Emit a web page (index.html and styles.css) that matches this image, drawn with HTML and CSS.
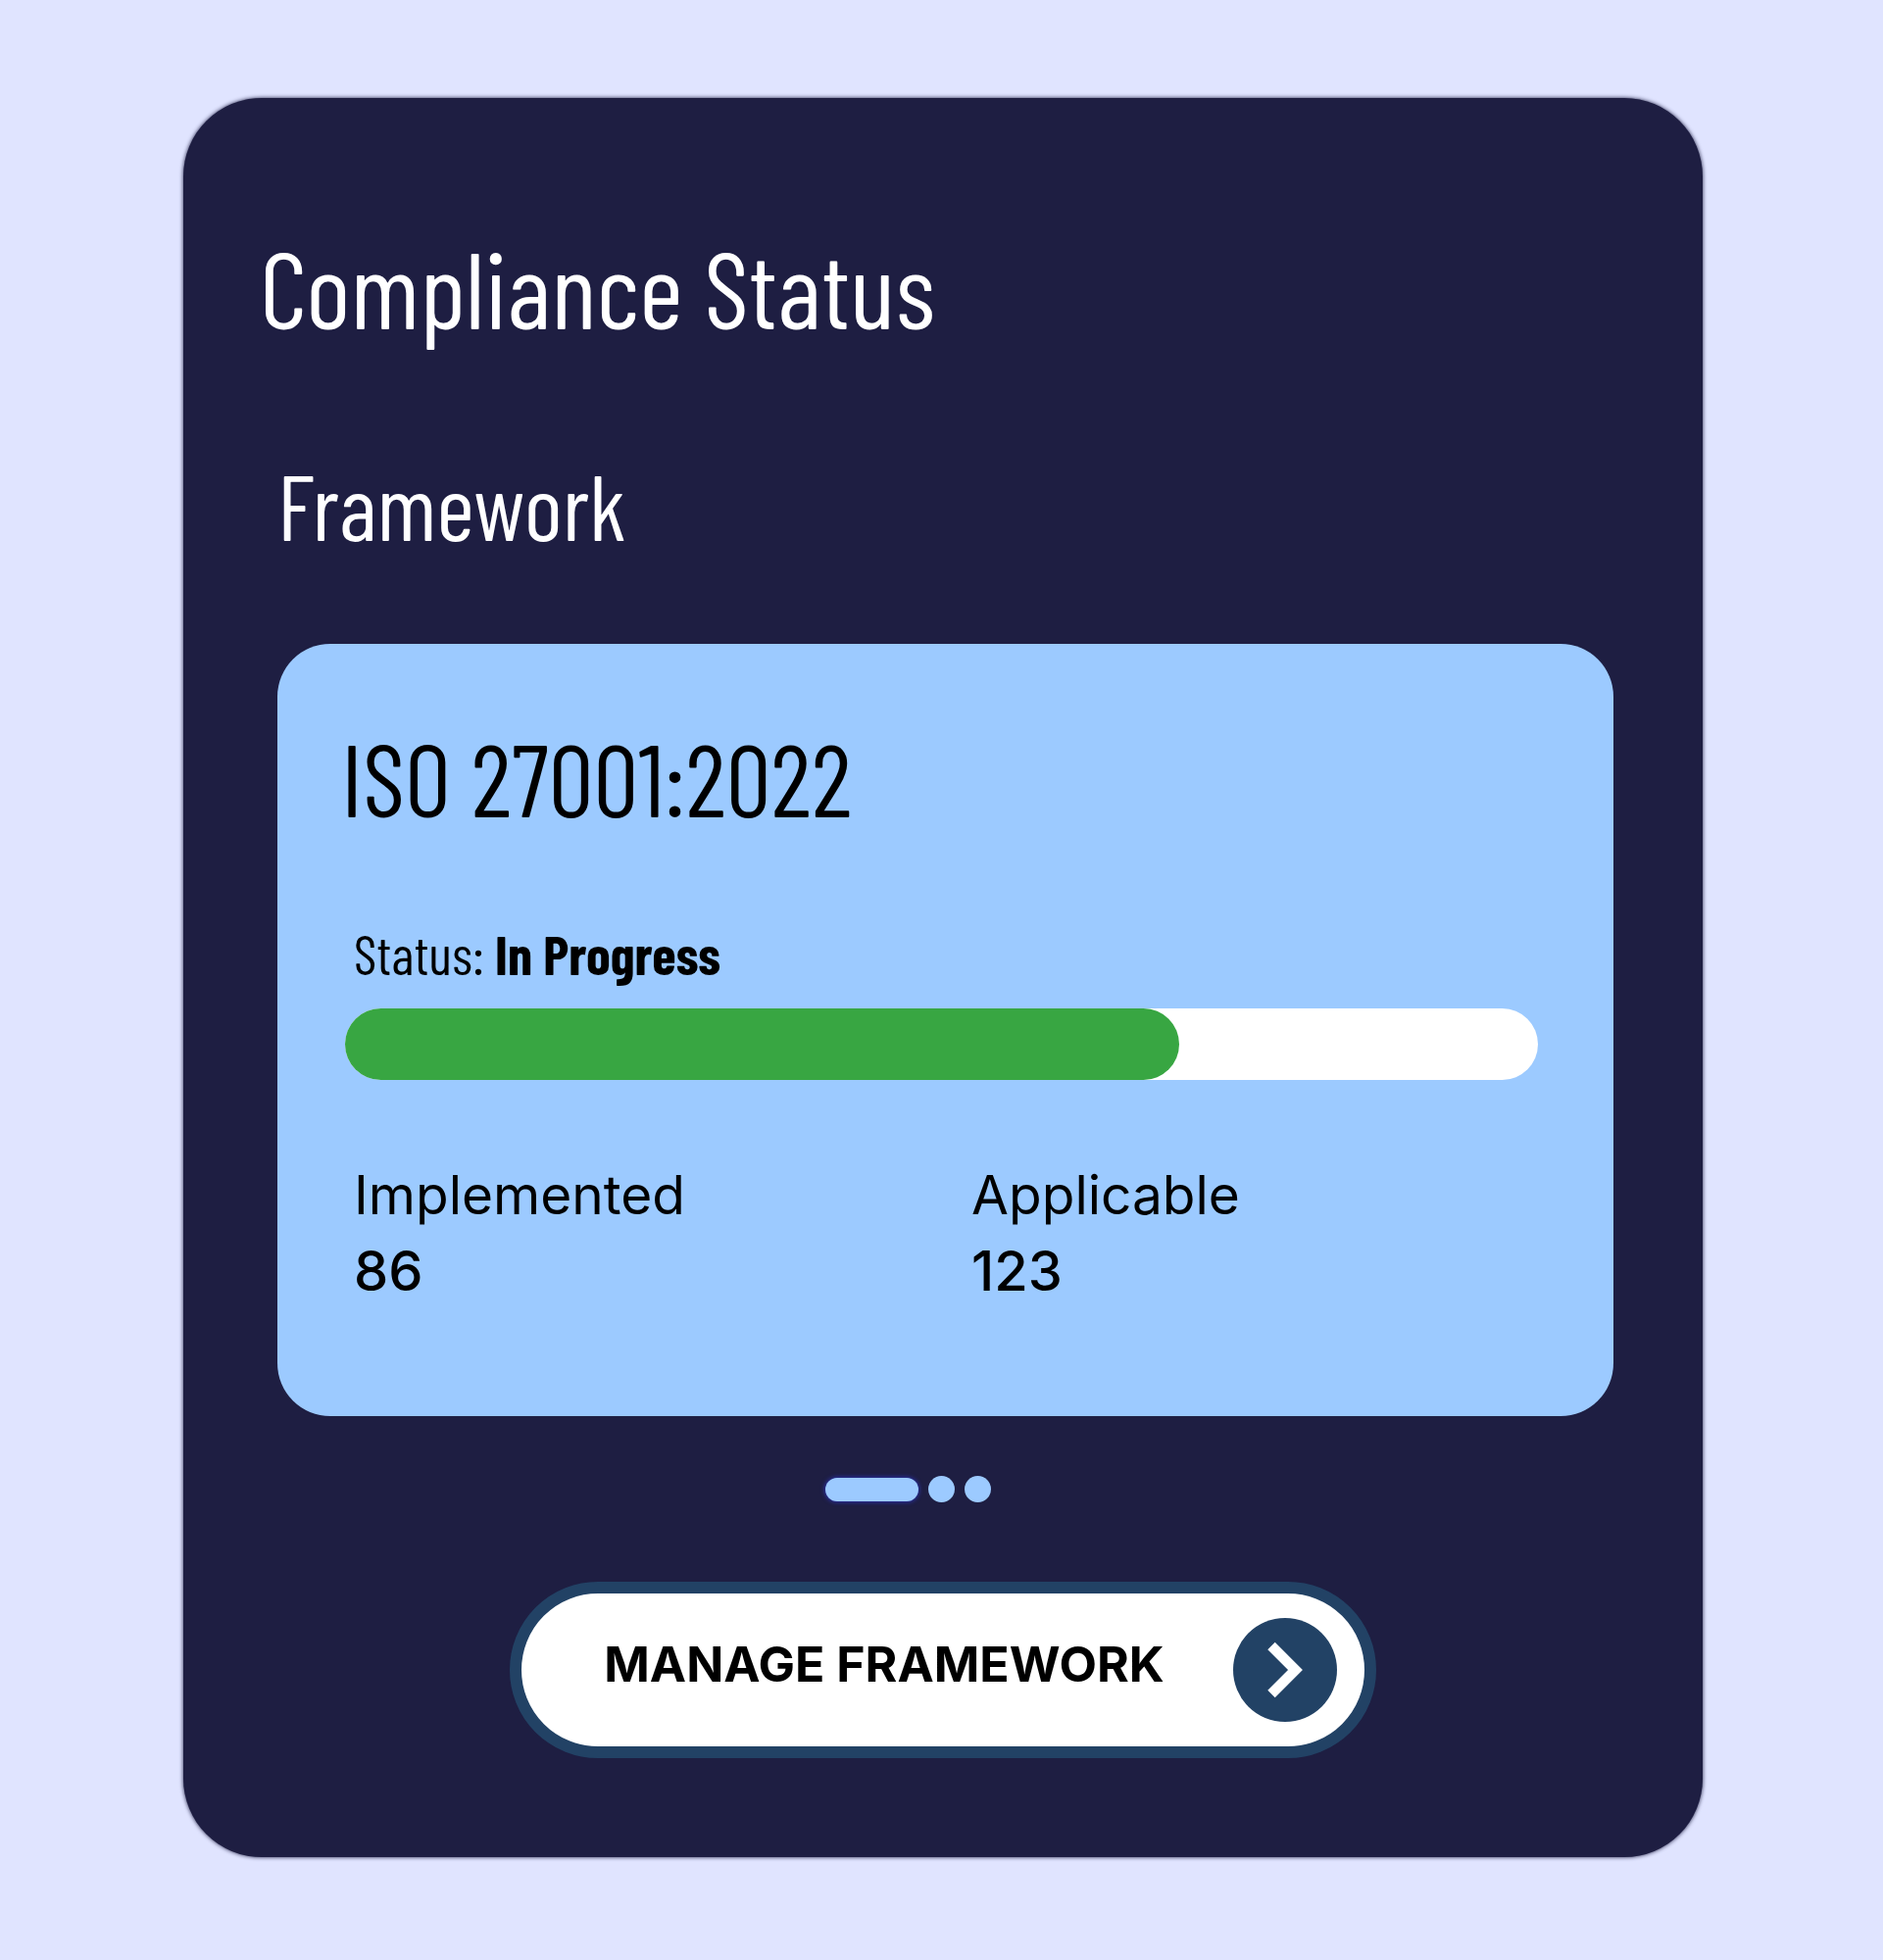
FILE: index.html
```html
<!DOCTYPE html>
<html lang="en">
<head>
  <meta charset="UTF-8">
  <meta name="viewport" content="width=device-width, initial-scale=1">
  <title>Compliance Status</title>
  <link rel="stylesheet" href="styles.css">
</head>
<body>

<main class="card">
    <h1 class="card-title">Compliance Status</h1>

    <section class="framework">
        <h2 class="framework-heading">Framework</h2>

        <article class="panel">
            <h3 class="panel-title">ISO 27001:2022</h3>

            <p class="status" id="status">Status: <strong>In Progress</strong></p>
            <div class="progress" role="progressbar" aria-labelledby="status" aria-valuemin="0" aria-valuemax="123" aria-valuenow="86">
                <div class="progress-fill" style="width: 69.9%"></div>
            </div>

            <dl class="stats">
                <div class="stat">
                    <dt>Implemented</dt>
                    <dd>86</dd>
                </div>
                <div class="stat">
                    <dt>Applicable</dt>
                    <dd>123</dd>
                </div>
            </dl>
        </article>

        <div class="pager">
            <button class="dot active" type="button" aria-label="Framework 1"></button>
            <button class="dot" type="button" aria-label="Framework 2"></button>
            <button class="dot" type="button" aria-label="Framework 3"></button>
        </div>
    </section>

    <button class="manage" type="button">
        <span class="manage-label">MANAGE FRAMEWORK</span>
        <svg class="manage-icon" viewBox="0 0 106 106" aria-hidden="true">
            <circle cx="53" cy="53" r="53" fill="#224265"/>
            <path d="M39 28.5 63.5 53 39 77.5" fill="none" stroke="#fff" stroke-width="10.5"/>
        </svg>
    </button>
</main>

</body>
</html>
```
FILE: styles.css
```css
:root {
    --page-bg: #e0e4ff;
    --card-bg: #1e1e42;
    --panel-bg: #9ccaff;
    --button-border: #224265;
    --green: #38a642;
    --condensed: "Barlow Condensed", "Roboto Condensed", "Liberation Sans Narrow", sans-serif;
}

* {
    margin: 0;
    padding: 0;
    box-sizing: border-box;
}

body {
    font-family: Inter, sans-serif;
    background: var(--page-bg);
    padding: 100px 22px 100px 25px;
}

.card {
    max-width: 1550px;
    margin: 0 auto;
    padding: 128px 78px 101px;
    background: var(--card-bg);
    border-radius: 80px;
    box-shadow: 0 0 4px var(--card-bg);
    display: flex;
    flex-direction: column;
}

.card-title,
.framework-heading,
.panel-title,
.status {
    font-family: var(--condensed);
    font-weight: 400;
}

.card-title {
    font-size: 109px;
    line-height: 130px;
    color: #fff;
    margin-bottom: 102px;
}

.framework {
    padding: 0 13px 0 18px;
}

.framework-heading {
    font-size: 94px;
    line-height: 110px;
    color: #fff;
    margin-bottom: 87px;
}

.panel {
    background: var(--panel-bg);
    border-radius: 54px;
    padding: 76px 77px 109px 69px;
    color: #000;
}

.panel-title {
    font-size: 103px;
    line-height: 120px;
    margin: 0 0 88px -4px;
}

.status {
    font-size: 56px;
    line-height: 64px;
    padding-left: 9px;
    margin-bottom: 24px;
}

.status strong {
    font-weight: 700;
}

.progress {
    height: 73px;
    background: #fff;
    border-radius: 37px;
}

.progress-fill {
    height: 100%;
    background: var(--green);
    border-radius: 37px;
}

.stats {
    display: grid;
    grid-template-columns: 52fr 48fr;
    column-gap: 4px;
    padding-left: 9px;
    margin-top: 78px;
    font-size: 55px;
    line-height: 78px;
}

.stat dd {
    font-size: 56px;
    font-weight: 500;
}

.pager {
    display: flex;
    justify-content: center;
    align-items: center;
    gap: 10px;
    margin: 61px 76px 81px 0;
}

.dot {
    width: 27px;
    height: 27px;
    border: none;
    border-radius: 50%;
    background: var(--panel-bg);
    cursor: pointer;
}

.dot.active {
    width: 95px;
    height: 24px;
    border-radius: 12px;
    box-shadow: 0 0 5px #3038d0;
}

.manage {
    align-self: center;
    display: flex;
    align-items: center;
    gap: 70px;
    height: 180px;
    padding: 0 28px 0 84px;
    border: 12px solid var(--button-border);
    border-radius: 90px;
    background: #fff;
    color: #000;
    font-family: inherit;
    font-size: 50px;
    font-weight: 700;
    line-height: 60px;
    cursor: pointer;
}

.manage-label {
    padding-bottom: 12px;
}

.manage-icon {
    width: 106px;
    height: 106px;
    flex-shrink: 0;
}
```
